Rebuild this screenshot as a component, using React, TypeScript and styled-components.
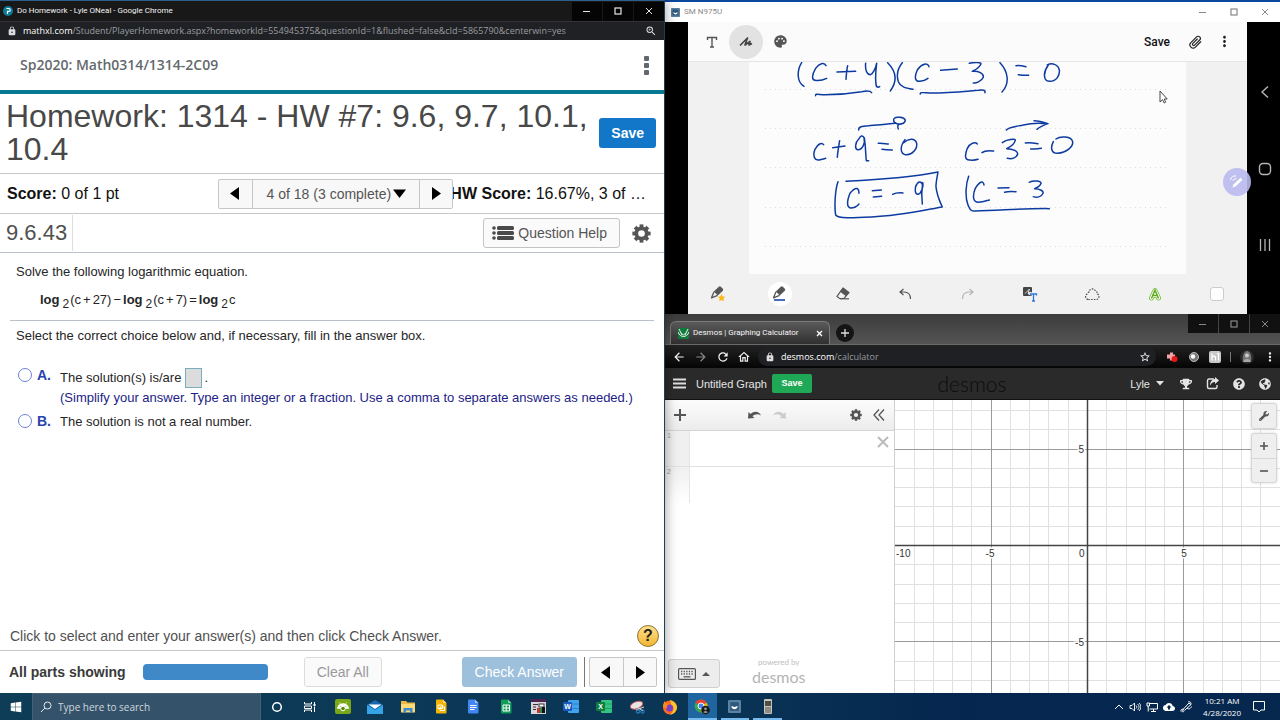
import React from "react";
import styled, { createGlobalStyle } from "styled-components";
import { FaWindows, FaTrophy, FaWrench, FaQuestionCircle, FaGlobeAmericas, FaAndroid } from "react-icons/fa";
import {
  MdPalette, MdMoreVert, MdArrowBack, MdArrowForward, MdRefresh, MdOutlineHome, MdLock, MdStarBorder,
  MdZoomIn, MdCloudUpload,
} from "react-icons/md";

const arial = `"Liberation Sans", Arial, sans-serif`;
const ui = `"Open Sans", "Segoe UI", sans-serif`;
const small = `Roboto, "Segoe UI", sans-serif`;
const BLUE = "#0d3ba0";

const GlobalStyle = createGlobalStyle`
  *, *::before, *::after { box-sizing: border-box; }
  body { margin: 0; font-family: ${arial}; color: #222; background: #000; }
  button { font: inherit; color: inherit; margin: 0; padding: 0; border: 0; background: none; }
  svg { display: block; flex: none; }
  p, h1, h2 { margin: 0; }
`;

const Screen = styled.div`
  min-height: 100vh;
  display: flex;
  flex-direction: column;
`;

const Desktop = styled.main`
  flex: 1;
  display: grid;
  grid-template-columns: 665fr 615fr;
`;

const IconButton = styled.button<{ $size?: number; $color?: string }>`
  display: grid;
  place-items: center;
  width: ${(p) => p.$size ?? 20}px;
  height: ${(p) => p.$size ?? 20}px;
  color: ${(p) => p.$color ?? "inherit"};
`;

/* ---------- homework window ---------- */

const HomeworkWindow = styled.section`
  position: relative;
  z-index: 1;
  display: flex;
  flex-direction: column;
  min-width: 0;
  background: #fff;
  border-top: 1px solid #2c5f8c;
  border-right: 1px solid #1f3f55;
  box-shadow: 0 0 12px rgba(0, 0, 0, 0.4);
`;

const TitleBar = styled.header<{ $light?: boolean }>`
  display: flex;
  align-items: center;
  height: 20px;
  padding-left: ${(p) => (p.$light ? 6 : 3)}px;
  gap: 4px;
  background: ${(p) => (p.$light ? "#fff" : "#181818")};
  color: ${(p) => (p.$light ? "#8a8a8a" : "#f2f2f2")};
  font: 8px/20px ${small};
`;

const WindowControls = styled.div<{ $bg?: string; $color?: string }>`
  display: flex;
  gap: 1px;
  margin-left: auto;
  color: ${(p) => p.$color ?? "#e8e8e8"};
  button {
    display: grid;
    place-items: center;
    width: 30px;
    height: 19px;
    background: ${(p) => p.$bg ?? "transparent"};
  }
`;

const AddressBar = styled.div`
  display: flex;
  align-items: center;
  height: 19px;
  padding: 0 7px 0 7px;
  gap: 6px;
  border-top: 1px solid #333;
  background: #202124;
  color: #9a9da1;
  font: 9px/18px ${ui};
  b { font-weight: 400; color: #fff; }
  svg:last-child { margin-left: auto; }
`;

const CourseHeader = styled.div`
  display: flex;
  align-items: center;
  justify-content: space-between;
  height: 54px;
  padding: 0 7px 0 20px;
  border-bottom: 4px solid #067a93;
  color: #63696e;
  font: 600 14px/20px ${ui};
`;

const HomeworkHeader = styled.div`
  display: flex;
  align-items: center;
  gap: 8px;
  padding: 6px 8px 7px 6px;
  border-bottom: 1px solid #c8c8cc;
  h1 {
    flex: 1;
    font: 400 32px/33px ${arial};
    color: #484848;
  }
`;

const PrimaryButton = styled.button<{ $muted?: boolean }>`
  height: 30px;
  padding: 0 ${(p) => (p.$muted ? 13 : 12)}px;
  border-radius: 3px;
  background: ${(p) => (p.$muted ? "#9dc0dd" : "#1277c9")};
  color: #fff;
  font: ${(p) => (p.$muted ? 400 : 700)} 14px/30px ${arial};
`;

const ScoreRow = styled.div`
  display: flex;
  align-items: center;
  height: 40px;
  padding: 0 18px 0 7px;
  border-bottom: 1px solid #c8c8cc;
  font-size: 16px;
  line-height: 20px;
  color: #111;
  white-space: nowrap;
`;

const ScoreText = styled.p<{ $fill?: boolean }>`
  flex: ${(p) => (p.$fill ? "1" : "none")};
`;

const ButtonGroup = styled.div<{ $overlap?: boolean }>`
  position: relative;
  z-index: 1;
  display: flex;
  margin-right: ${(p) => (p.$overlap ? -3 : 0)}px;
  border: 1px solid #c6c6c6;
  border-radius: 2px;
  background: #f8f8f8;
  button {
    display: flex;
    align-items: center;
    justify-content: center;
    gap: 2px;
    min-width: 33px;
    height: 28px;
    color: #555;
    font: 14px/28px ${arial};
  }
  button + button { border-left: 1px solid #c6c6c6; }
`;

const WideButton = styled.button`
  width: 167px;
`;

const QuestionRow = styled.div`
  display: flex;
  align-items: center;
  height: 39px;
  padding: 0 13px 0 6px;
  border-bottom: 1px solid #bcc3cf;
  color: #505050;
  h2 {
    padding-right: 5px;
    border-right: 1px solid #ddd;
    font: 400 22px/36px ${arial};
  }
`;

const OutlineButton = styled.button<{ $faded?: boolean }>`
  display: flex;
  align-items: center;
  gap: 4px;
  height: 30px;
  padding: 0 12px 0 ${(p) => (p.$faded ? 12 : 8)}px;
  border: 1px solid ${(p) => (p.$faded ? "#dcdcdc" : "#c4c4c4")};
  border-radius: 3px;
  background: #fafafa;
  color: ${(p) => (p.$faded ? "#999" : "#555")};
  font: 14px/28px ${arial};
`;

const QuestionTools = styled.div`
  display: flex;
  align-items: center;
  gap: 11px;
  margin-left: auto;
  color: #555;
`;

const Problem = styled.article`
  flex: 1;
  padding: 10px 10px 0;
  font-size: 13px;
  line-height: 18px;
  color: #262626;
`;

const Prompt = styled.p`
  padding-left: 6px;
`;

const Equation = styled.p`
  margin: 10px 0 11px;
  padding-left: 30px;
  sub {
    position: relative;
    top: 4px;
    margin: 0 1px 0 3px;
    font-size: 12px;
    line-height: 0;
    vertical-align: baseline;
  }
`;

const Op = styled.span`
  margin: 0 2px;
`;

const Rule = styled.hr`
  margin: 0 0 6px;
  border: 0;
  border-top: 1px solid #b9c0cc;
`;

const Choices = styled.div`
  display: grid;
  gap: 6px;
  padding: 22px 0 0 8px;
`;

const Choice = styled.div`
  display: grid;
  grid-template-columns: 19px 23px 1fr;
  align-items: start;
  input[type="radio"] {
    appearance: none;
    width: 14px;
    height: 14px;
    margin: 1px 0 0;
    border: 1px solid #6d84d6;
    border-radius: 50%;
    background: #fff;
  }
  label { display: contents; }
`;

const ChoiceLetter = styled.b`
  color: #2743ad;
  font-size: 14px;
  line-height: 16px;
`;

const AnswerLine = styled.span`
  display: flex;
  align-items: center;
  gap: 4px;
  height: 22px;
`;

const AnswerBox = styled.input`
  width: 17px;
  height: 20px;
  margin: 0 -2px 0 0;
  padding: 0;
  border: 1px solid #79aebf;
  background: #dcdcdc;
`;

const Note = styled.span`
  display: block;
  color: #221d86;
`;

const HintRow = styled.div`
  display: flex;
  align-items: center;
  justify-content: space-between;
  height: 29px;
  padding: 0 5px 0 10px;
  border-bottom: 1px solid #c8c8cc;
  color: #505050;
  font-size: 14px;
`;

const HelpButton = styled.button`
  width: 22px;
  height: 22px;
  border: 1px solid #8d7434;
  border-radius: 50%;
  background: linear-gradient(#ffe08a, #f2b632);
  color: #222;
  font: 700 16px/20px ${arial};
`;

const FooterBar = styled.footer`
  display: flex;
  align-items: center;
  height: 42px;
  padding: 0 7px 0 9px;
  color: #3a3a3a;
  font-size: 14px;
`;

const Progress = styled.div`
  width: 125px;
  height: 16px;
  margin: 0 36px 0 17px;
  border-radius: 4px;
  background: #3f89c8;
`;

const FooterActions = styled.div`
  display: flex;
  align-items: center;
  margin-left: auto;
`;

const Divider = styled.span`
  width: 1px;
  height: 30px;
  margin: 0 4px 0 7px;
  background: #777;
`;

/* ---------- phone mirror window ---------- */

const RightColumn = styled.div`
  display: flex;
  flex-direction: column;
  min-width: 0;
`;

const PhoneWindow = styled.section`
  border-top: 2px solid #0b479b;
  background: #000;
`;

const PhoneBody = styled.div`
  position: relative;
  display: grid;
  grid-template-columns: 23px 1fr 33px;
  height: 292px;
`;

const Notes = styled.div`
  grid-column: 2;
  display: flex;
  flex-direction: column;
  background: #f1f1f1;
`;

const NotesToolbar = styled.div`
  display: flex;
  align-items: center;
  height: 40px;
  padding: 0 9px 0 7px;
  border-bottom: 1px solid #e6e6e6;
  background: #fbfbfb;
  color: #555;
`;

const ToolCircle = styled.button<{ $active?: boolean }>`
  display: grid;
  place-items: center;
  width: 34px;
  height: 34px;
  border-radius: 50%;
  background: ${(p) => (p.$active ? "#e2e2e2" : "transparent")};
`;

const SaveText = styled.button`
  margin: 0 12px 0 auto;
  color: #111;
  font: 500 12px/20px Roboto, sans-serif;
`;

const Paper = styled.div`
  height: 212px;
  margin: 0 61px;
  background: #fcfcfd;
  svg { width: 100%; height: 212px; }
`;

const PenBar = styled.div`
  display: flex;
  justify-content: space-between;
  align-items: center;
  height: 40px;
  padding: 0 18px;
  color: #555;
`;

const PenTool = styled.button<{ $active?: boolean }>`
  display: grid;
  place-items: center;
  width: 24px;
  height: 24px;
  border-radius: 50%;
  background: ${(p) => (p.$active ? "#fff" : "transparent")};
`;

const AndroidKeys = styled.nav`
  display: flex;
  flex-direction: column;
  justify-content: space-between;
  align-items: center;
  padding: 63px 0 62px 2px;
  color: #b5b5b5;
`;

const FloatingPen = styled.button`
  position: absolute;
  right: 29px;
  top: 146px;
  display: grid;
  place-items: center;
  width: 28px;
  height: 28px;
  border-radius: 50%;
  background: rgba(186, 186, 240, 0.9);
`;

const Cursor = styled.svg`
  position: absolute;
  right: 112px;
  top: 68px;
`;

/* ---------- Desmos window ---------- */

const DesmosWindow = styled.section`
  flex: 1;
  display: flex;
  flex-direction: column;
  background: #fff;
`;

const TabStrip = styled.div`
  display: flex;
  align-items: flex-end;
  height: 31px;
  padding-left: 5px;
  background: linear-gradient(#3c3c3c, #545454);
  border-bottom: 1px solid #6a6a6a;
`;

const Tab = styled.div`
  display: flex;
  align-items: center;
  gap: 4px;
  width: 160px;
  height: 23px;
  padding: 0 6px 0 7px;
  border: 1px solid #7a7a7a;
  border-bottom: 0;
  border-radius: 6px 6px 0 0;
  background: linear-gradient(#5a5a5a, #303030);
  color: #f5f5f5;
  font: 8px/22px ${small};
  white-space: nowrap;
  button { margin-left: auto; }
`;

const NewTab = styled.button`
  display: grid;
  place-items: center;
  width: 18px;
  height: 18px;
  margin: 0 0 2px 6px;
  border-radius: 50%;
  background: #141414;
  color: #ddd;
`;

const TabControls = styled.div`
  align-self: flex-start;
  margin-left: auto;
`;

const BrowserBar = styled.div`
  display: flex;
  align-items: center;
  height: 23px;
  padding: 0 3px;
  background: linear-gradient(#222, #050505);
  color: #f2f2f2;
`;

const Omnibox = styled.div`
  flex: 1;
  display: flex;
  align-items: center;
  gap: 6px;
  height: 19px;
  margin: 0 9px 0 4px;
  padding: 0 5px 0 7px;
  border-radius: 10px;
  background: #1f2023;
  color: #96999d;
  font: 9px/19px ${ui};
  b { font-weight: 400; color: #fff; }
  svg:last-child { margin-left: auto; }
`;

const Extensions = styled.div`
  display: flex;
  align-items: center;
  gap: 9px;
`;

const DesmosHeader = styled.div`
  display: grid;
  grid-template-columns: 1fr auto 1fr;
  align-items: center;
  height: 32px;
  padding: 0 9px 0 8px;
  border-bottom: 1px solid #111;
  background: #2a2a2a;
  color: #e4e4e4;
`;

const HeaderSide = styled.div<{ $end?: boolean }>`
  display: flex;
  align-items: center;
  justify-content: ${(p) => (p.$end ? "flex-end" : "flex-start")};
  gap: ${(p) => (p.$end ? 14 : 5)}px;
  font-size: 11px;
  white-space: nowrap;
`;

const GraphTitle = styled.span`
  margin-left: 5px;
`;

const SaveGraph = styled.button`
  width: 40px;
  height: 19px;
  border-radius: 2px;
  background: #1fa855;
  color: #fff;
  font: 700 9px/19px ${arial};
`;

const UserMenu = styled.button`
  display: flex;
  align-items: center;
  gap: 6px;
  margin-right: 2px;
`;

const Wordmark = styled.span<{ $small?: boolean }>`
  color: ${(p) => (p.$small ? "#b4b4b4" : "#0c0c0c")};
  font: ${(p) => (p.$small ? 400 : 300)} ${(p) => (p.$small ? 16 : 21)}px/${(p) => (p.$small ? 19 : 24)}px Lato, sans-serif;
`;

const DesmosBody = styled.div`
  flex: 1;
  display: grid;
  grid-template-columns: 230px 1fr;
`;

const Expressions = styled.div`
  display: flex;
  flex-direction: column;
  border-right: 1px solid #cfcfcf;
`;

const ExpressionBar = styled.div`
  display: flex;
  align-items: center;
  height: 31px;
  padding: 0 4px 0 5px;
  border-bottom: 1px solid #d4d4d4;
  background: linear-gradient(#fcfcfc, #ececec);
  color: #555;
`;

const Grow = styled.span`
  flex: 1;
`;

const ExpressionRow = styled.div<{ $last?: boolean }>`
  display: flex;
  justify-content: space-between;
  height: 36px;
  border-bottom: ${(p) => (p.$last ? "0" : "1px solid #e2e2e2")};
  color: #b0b0b0;
`;

const Gutter = styled.span<{ $last?: boolean }>`
  width: 25px;
  padding: 1px 2px;
  border-right: 1px solid #e6e6e6;
  background: ${(p) => (p.$last ? "linear-gradient(#f0f0f0, #fff)" : "#f0f0f0")};
  color: #999;
  font-size: 7px;
  line-height: 8px;
`;

const PanelFooter = styled.div`
  display: flex;
  align-items: center;
  gap: 32px;
  margin-top: auto;
  padding: 0 0 3px 3px;
`;

const KeypadButton = styled.button`
  display: flex;
  align-items: center;
  justify-content: center;
  gap: 6px;
  width: 52px;
  height: 29px;
  border: 1px solid #d0d0d0;
  border-radius: 3px;
  background: #ededed;
  color: #555;
`;

const PoweredBy = styled.p`
  display: flex;
  flex-direction: column;
  align-items: center;
  padding-bottom: 4px;
  color: #bdbdbd;
  font: 8px/10px Lato, sans-serif;
`;

const GraphArea = styled.div`
  position: relative;
  overflow: hidden;
  svg.plot {
    position: absolute;
    width: 100%;
    height: 100%;
  }
`;

const GraphControls = styled.div`
  position: absolute;
  right: 3px;
  top: 3px;
  display: grid;
  gap: 4px;
`;

const ControlStack = styled.div`
  display: grid;
  border: 1px solid #d6d6d6;
  border-radius: 3px;
  background: #efefef;
  box-shadow: 0 0 3px rgba(0, 0, 0, 0.15);
  color: #555;
  button {
    display: grid;
    place-items: center;
    width: 24px;
    height: 24px;
  }
  button + button { border-top: 1px solid #d6d6d6; }
`;

/* ---------- taskbar ---------- */

const Taskbar = styled.footer`
  position: relative;
  z-index: 2;
  display: flex;
  align-items: stretch;
  height: 27px;
  background: linear-gradient(90deg, #0d3d57, #0a3555 55%, #05264f 75%, #06284f);
  color: #fff;
`;

const StartButton = styled.button`
  display: grid;
  place-items: center;
  width: 32px;
`;

const SearchBox = styled.label`
  display: flex;
  align-items: center;
  gap: 6px;
  width: 229px;
  padding-left: 7px;
  border: 1px solid #466076;
  border-bottom: 0;
  background: #34526a;
  input {
    flex: 1;
    min-width: 0;
    padding: 0;
    border: 0;
    background: none;
    color: #d5dde4;
    font: 10px/20px ${ui};
  }
  input::placeholder { color: #d0d8df; opacity: 1; }
`;

const Apps = styled.nav`
  display: grid;
  grid-template-columns: repeat(16, 1fr);
  width: 523px;
`;

const TaskButton = styled.button<{ $open?: boolean; $focus?: boolean }>`
  display: grid;
  place-items: center;
  margin: 0 2px;
  background: ${(p) => (p.$focus ? "#1f65a0" : "transparent")};
  box-shadow: ${(p) => (p.$open ? "inset 0 -2px #76b9ed" : "none")};
`;

const Tray = styled.div`
  display: flex;
  align-items: center;
  gap: 5px;
  margin-left: auto;
  padding-right: 15px;
`;

const Clock = styled.time`
  margin: 0 7px 0 5px;
  text-align: center;
  font: 8px/12px ${ui};
`;

/* ---------- small drawings ---------- */

const Svg = ({ w, h = w, vb, children, ...rest }: any) => (
  <svg width={w} height={h} viewBox={vb ?? `0 0 ${w} ${h}`} fill="none" {...rest}>{children}</svg>
);

const Controls = ({ bg, color }: { bg?: string; color?: string }) => (
  <WindowControls $bg={bg} $color={color}>
    <button aria-label="Minimize"><Svg w={8}><path d="M0 4.500h7" stroke="currentColor" /></Svg></button>
    <button aria-label="Maximize"><Svg w={8}><rect x="1" y="1" width="6" height="6" stroke="currentColor" strokeWidth="1.200" /></Svg></button>
    <button aria-label="Close"><Svg w={8}><path d="M1 1l6 6M7 1L1 7" stroke="currentColor" /></Svg></button>
  </WindowControls>
);

const Gear = ({ size }: { size: number }) => (
  <Svg w={size} vb="0 0 20 20" stroke="currentColor">
    <circle cx="10" cy="10" r="5.500" strokeWidth="4" />
    {[0, 45, 90, 135, 180, 225, 270, 315].map((a) => (
      <path key={a} d="M10 .4V4" strokeWidth="4" transform={`rotate(${a} 10 10)`} />
    ))}
  </Svg>
);

const Triangle = ({ dir }: { dir: "left" | "right" | "down" }) => {
  const d = { left: "M10 0v13L1 6.500z", right: "M2 0v13l9-6.500z", down: "M0 2.500h13L6.500 11z" }[dir];
  return <Svg w={13}><path d={d} fill="#000" /></Svg>;
};

const PearsonIcon = () => (
  <Svg w={10}><circle cx="5" cy="5" r="5" fill="#0e7c96" /><path d="M3.500 2.500h2.300a1.400 1.400 0 010 2.800H4.500V8" stroke="#fff" strokeWidth="1.200" /></Svg>
);

const FlowIcon = ({ size }: { size: number }) => (
  <Svg w={size} vb="0 0 12 12"><rect width="12" height="12" rx="1" fill="#5a82a3" /><rect x="2" y="2" width="8" height="8" fill="#2f587b" /><path d="M3 5.500c.5 4 5.500 4 6 0l-3 1z" fill="#fff" /></Svg>
);

const HelpListIcon = () => (
  <Svg w={22} h={16}>
    <g fill="#4a4a4a">
      {[1, 6, 11].map((y) => (
        <g key={y}><circle cx="2" cy={y + 2} r="1.800" /><rect x="5" y={y} width="17" height="4" rx="1.500" /></g>
      ))}
    </g>
  </Svg>
);

const PaperclipIcon = () => (
  <Svg w={16}>
    <g transform="rotate(45 8 8)">
      <path d="M11.200 4.500v7.500a3.200 3.200 0 01-6.400 0V4a2.200 2.200 0 014.400 0v7.200a1.200 1.200 0 01-2.400 0V5" stroke="currentColor" strokeWidth="1.200" strokeLinecap="round" />
    </g>
  </Svg>
);

const Marker = ({ mark }: { mark: React.ReactNode }) => (
  <Svg w={18}>
    <path d="M4.800 6.500l5-4.700a1.500 1.500 0 012 0l2 1.900a1.500 1.500 0 010 2L8.800 10.500z" fill="#555" />
    <path d="M5 6.800L2.500 12.800 8.600 10.300" stroke="#555" strokeWidth="1.300" strokeLinejoin="round" />
    {mark}
  </Svg>
);

const EraserIcon = () => (
  <Svg w={16}><path d="M8 2l6 4.500-5 6H4.500L2 10.500z" stroke="#555" strokeWidth="1.200" /><path d="M8 2l6 4.500-3 3.800-6.200-4.700z" fill="#555" /><path d="M5 12.800h9" stroke="#555" strokeWidth="1.200" /></Svg>
);

const CurvedArrow = ({ flip, color }: { flip?: boolean; color: string }) => (
  <Svg w={14}><g transform={flip ? "translate(14 0) scale(-1 1)" : undefined}><path d="M5.500 2L2 5l3.500 3M2 5h4c4 0 6.500 2.500 6.500 7" stroke={color} strokeWidth="1.200" /></g></Svg>
);

const SwoopArrow = ({ flip, color }: { flip?: boolean; color: string }) => (
  <Svg w={15} h={10}><g transform={flip ? "translate(15 0) scale(-1 1)" : undefined}><path d="M1.500 2L1 8.500l6.500-.5-2-1.800C8 4 11 3.500 14 5.500 12 1 7 .8 3.500 4z" fill={color} /></g></Svg>
);

const Handwriting = () => (
  <svg viewBox="749 62 437 212" preserveAspectRatio="xMidYMid slice" fill="none" aria-label="Handwritten solution">
    <g stroke="#dcdce0" strokeDasharray="1 4">
      {[89, 128, 167, 207, 246].map((y) => <path key={y} d={`M765 ${y}.5H1168`} />)}
    </g>
    <g stroke={BLUE} strokeWidth="4.500" strokeLinecap="round" strokeLinejoin="round">
      <g transform="translate(665 0) scale(.3333)">
        <path d="M410 188C396 210 394 245 417 259M483 197C478 186 462 190 452 205C440 225 440 240 450 241C462 243 475 240 485 235M516 216L572 214M548 197C545 210 544 225 543 238M602 190C600 210 606 224 616 224C624 222 632 205 635 190C632 215 630 240 634 258C638 264 641 262 644 260M668 188C690 210 700 240 676 273M712 188C698 205 694 225 700 245C706 260 720 264 744 268M792 200C788 186 770 192 757 210C746 235 752 245 765 244C775 243 785 238 789 235M827 211L877 207M913 190C930 186 950 187 948 192C942 205 930 210 922 214C940 212 957 220 955 232C950 245 932 250 925 249" />
        <path d="M452 287C450 280 460 284 480 284C520 284 560 280 590 275C605 272 616 272 620 278M766 282C764 275 780 279 800 279C850 279 900 274 940 271C955 269 962 270 960 278" />
        <path d="M476 434C470 426 458 432 450 448C442 470 450 482 462 480C470 479 478 476 482 475M503 443L540 438M524 422C521 440 518 455 517 472M583 415C568 430 570 448 578 449C592 450 602 430 597 413C592 404 586 408 583 415M598 413C603 445 602 470 604 482L611 482" />
        <path d="M581 390C580 380 590 378 610 377C640 374 670 373 690 370C680 355 690 350 705 352C722 354 725 362 715 370C705 374 695 372 690 368M700 387C697 380 700 374 703 372M640 430C650 429 660 431 670 432M651 448C662 450 673 450 682 450M720 419C704 440 706 460 720 464C742 468 758 445 755 430C750 412 730 416 716 428" />
        <path d="M519 545C510 570 508 620 512 645C520 656 560 654 620 651C700 648 780 630 832 621C822 600 815 580 813 560C813 545 817 530 819 516C760 528 680 537 543 544M582 580C582 560 570 562 555 580C545 605 545 622 557 624C568 624 578 617 582 612M622 572L649 570M625 591L650 589M683 583C693 578 702 578 714 579M773 555C768 540 758 545 752 560C748 582 756 586 765 580C774 565 776 555 773 548C770 570 770 595 772 612" />
      </g>
      <g transform="translate(960 0) scale(.3333)">
        <path d="M120 188C145 215 150 250 126 276M168 197C178 195 190 198 198 200M175 224C185 226 195 226 206 226M265 195C250 215 248 243 268 244C290 245 300 225 298 210C294 192 275 188 262 195" />
        <path d="M52 432C45 424 30 430 22 445C14 465 14 480 28 480C38 481 48 480 54 478M66 458C76 450 88 452 101 453M127 428C140 418 165 416 166 420C165 432 152 440 140 446C160 446 174 455 173 462C170 475 155 478 142 475M139 390C145 382 165 380 190 375C210 370 240 369 262 371M222 362C235 362 250 366 264 371C250 376 238 382 231 388M196 429C208 427 222 429 234 431M212 447C225 448 235 447 244 445M280 425C270 445 275 460 292 460C320 458 340 440 338 425C334 408 300 408 288 417" />
        <path d="M26 529C18 550 14 590 24 615C30 630 34 634 45 633C120 632 180 625 268 626M72 555C70 540 58 545 46 565C36 590 40 606 55 607C70 606 80 602 88 600M114 564L147 563M134 577C145 573 158 574 168 575M208 547C220 540 245 543 243 550C240 560 232 563 224 566C240 566 252 574 249 580C244 592 230 593 220 590" />
      </g>
    </g>
  </svg>
);

const range = (a: number, b: number) => Array.from({ length: b - a + 1 }, (_, i) => a + i);
const lineKind = (n: number) => (n === 0 ? "axis" : n % 5 === 0 ? "major" : "minor");

const Plot = () => {
  const px = (n: number) => Math.round(192 + n * 19.27) + 0.5;
  const py = (n: number) => Math.round(145 - n * 19.27) + 0.5;
  const shade = { minor: "#e0e0e0", major: "#9a9a9a", axis: "#444" };
  return (
    <svg className="plot" viewBox="0 0 385 293" preserveAspectRatio="xMidYMid slice" role="img" aria-label="Empty graph">
      {(["minor", "major", "axis"] as const).map((kind) => (
        <g key={kind} strokeWidth={kind === "axis" ? 1.5 : 1} stroke={shade[kind]}>
          {range(-9, 9).filter((n) => lineKind(n) === kind).map((n) => <path key={n} d={`M${px(n)} 0V293`} />)}
          {range(-7, 7).filter((n) => lineKind(n) === kind).map((n) => <path key={n} d={`M0 ${py(n)}H385`} />)}
        </g>
      ))}
      <g fontFamily="Liberation Sans, sans-serif" fontSize="10" fill="#333" stroke="#fff" strokeWidth="3" paintOrder="stroke">
        <text x="1" y="157">-10</text>
        <text x="95" y="157" textAnchor="middle">-5</text>
        <text x="184" y="157">0</text>
        <text x="289" y="157" textAnchor="middle">5</text>
        <text x="189" y="53" textAnchor="end">5</text>
        <text x="189" y="246" textAnchor="end">-5</text>
      </g>
    </svg>
  );
};

const FileIcon = ({ fill, children }: any) => (
  <Svg w={12} h={15}><path d="M1 1.500A1 1 0 012 .5h6l3.500 3.500v9.500a1 1 0 01-1 1H2a1 1 0 01-1-1z" fill={fill} /><path d="M8 .5V4h3.500z" fill="#fff" opacity=".5" />{children}</Svg>
);

const OfficeIcon = ({ letter, dark, light }: { letter: string; dark: string; light: string }) => (
  <Svg w={17} h={15}>
    <rect x="5" y="1" width="11" height="13" rx="1" fill={light} />
    <path d="M5 5h11M5 9.500h11" stroke={dark} strokeOpacity=".5" />
    <rect y="3" width="9" height="9" rx="1" fill={dark} />
    <text x="4.500" y="10" fontSize="7" fontWeight="700" fontFamily="Liberation Sans" textAnchor="middle" fill="#fff">{letter}</text>
  </Svg>
);

const taskApps: { name: string; icon: React.ReactNode; open?: boolean; focus?: boolean }[] = [
  { name: "Cortana", icon: <Svg w={12}><circle cx="6" cy="6" r="4.300" stroke="#fff" strokeWidth="1.500" /></Svg> },
  { name: "Task view", icon: <Svg w={12}><path d="M.5 1v2h7V1M.5 11V9h7v2M.5 5h7v2.500h-7zM10.500 1v2M10.500 5.500V11" stroke="#fff" /><rect x="9.500" y="3" width="2" height="2" fill="#fff" /></Svg> },
  { name: "Android", icon: <Svg w={16} h={15}><rect width="16" height="15" rx="2" fill="#78a818" /><FaAndroid x="2" y="1" size={12} color="#fff" /><circle cx="8" cy="9.500" r="2.300" fill="#5b8a10" stroke="#fff" /></Svg> },
  { name: "Mail", icon: <Svg w={16} h={14}><path d="M0 5l8-5 8 5v9H0z" fill="#1668b5" /><path d="M1.500 4.500h13L8 9z" fill="#fff" /><path d="M0 5l8 5 8-5v9H0z" fill="#35a5e8" /></Svg> },
  { name: "File Explorer", icon: <Svg w={16} h={13}><path d="M1 1h5l1.500 1.500H15V12H1z" fill="#e9b847" /><path d="M1 4h14v8.500H1z" fill="#fbd975" /><path d="M3.500 12.500V8h9v4.500h-2.500v-2H6v2z" fill="#3d8bd0" /></Svg> },
  { name: "Slides", icon: <FileIcon fill="#f4b400"><path d="M3 6h4.500v3.500H3zM5 8h4.500v3.500H5z" stroke="#fff" /></FileIcon> },
  { name: "Docs", icon: <FileIcon fill="#4285f4"><path d="M3 6.500h6.500M3 8.500h6.500M3 10.500h4.500" stroke="#fff" /></FileIcon> },
  { name: "Sheets", icon: <FileIcon fill="#0f9d58"><path d="M3 6h6.500v6H3zM3 9h6.500M6.200 6v6" stroke="#fff" /></FileIcon> },
  { name: "Gradebook", icon: <Svg w={15} h={15}><rect width="15" height="15" fill="#d8d4dc" /><rect width="15" height="3" fill="#4d2350" /><path d="M2 5.500h5M2 8h3M2 10.500h3" stroke="#333" /><rect x="8" y="5" width="5" height="3" fill="#fff" stroke="#333" /><rect x="6" y="9" width="3" height="5" fill="#c13a2c" /><rect x="9" y="9" width="2" height="5" fill="#2a8a55" /><rect x="11" y="8" width="3" height="6" fill="#111" /></Svg> },
  { name: "Word", icon: <OfficeIcon letter="W" dark="#185abd" light="#41a5ee" /> },
  { name: "Excel", icon: <OfficeIcon letter="X" dark="#107c41" light="#33c481" /> },
  { name: "Snipping Tool", icon: <Svg w={16} h={14}><ellipse cx="7.500" cy="5" rx="6.500" ry="3.500" transform="rotate(-20 8 5)" fill="#e8e4e6" stroke="#c25a5a" /><path d="M7 10l8-3M8 7l6 4" stroke="#ddd" /><circle cx="9" cy="11.500" r="1.700" stroke="#3a96d8" /><circle cx="13.500" cy="11.500" r="1.700" stroke="#3a96d8" /></Svg> },
  { name: "Firefox", icon: <Svg w={16}><circle cx="8" cy="8.500" r="7" fill="#ff6a1f" /><path d="M8 1c4 1 7 4 7 8-1 4-4 6.500-7 6.500C12 13 13 8 9 5z" fill="#ffc52e" /><circle cx="7.500" cy="9" r="3.500" fill="#7a3fc8" /><path d="M1 8c0-3 1-5 2-6 0 2 2 3 4 3-2 1-3 3-1.500 4.500" fill="#ff8a1f" /></Svg> },
  {
    name: "Chrome", open: true, focus: true,
    icon: <Svg w={16}><circle cx="7" cy="7" r="6.500" fill="#34a853" /><path d="M7 7L1.400 3.700A6.500 6.500 0 0112.600 3.700z" fill="#ea4335" /><path d="M7 7l5.600-3.300A6.500 6.500 0 017 13.500z" fill="#fbbc05" /><circle cx="7" cy="7" r="3" fill="#4285f4" stroke="#fff" /><circle cx="11.500" cy="11" r="4.300" fill="#1a1a1a" /><circle cx="11.500" cy="9.800" r="1.400" fill="#999" /><path d="M9.500 14c0-3 4-3 4 0" fill="#888" /></Svg>,
  },
  { name: "Flow", open: true, icon: <FlowIcon size={13} /> },
  { name: "Phone", open: true, icon: <Svg w={8} h={15}><rect width="8" height="15" rx="1" fill="#c8c4b8" /><rect x="1" y="2" width="6" height="5" fill="#4b4f4a" /><path d="M1 9h6M1 11h6M1 13h6" stroke="#555" /></Svg> },
];

/* ---------- windows ---------- */

const Homework = () => (
  <HomeworkWindow>
    <TitleBar>
      <PearsonIcon />
      <span>Do Homework - Lyle ONeal - Google Chrome</span>
      <Controls bg="#050505" />
    </TitleBar>
    <AddressBar>
      <MdLock size={10} color="#ddd" />
      <span><b>mathxl.com</b>/Student/PlayerHomework.aspx?homeworkId=554945375&amp;questionId=1&amp;flushed=false&amp;cId=5865790&amp;centerwin=yes</span>
      <MdZoomIn size={12} color="#ddd" />
    </AddressBar>
    <CourseHeader>
      <span>Sp2020: Math0314/1314-2C09</span>
      <IconButton aria-label="Menu"><Svg w={6} h={19} fill="#62686d"><rect width="5" height="5" rx="1" /><rect y="7" width="5" height="5" rx="1" /><rect y="14" width="5" height="5" rx="1" /></Svg></IconButton>
    </CourseHeader>
    <HomeworkHeader>
      <h1>Homework: 1314 - HW #7: 9.6, 9.7, 10.1, 10.4</h1>
      <PrimaryButton>Save</PrimaryButton>
    </HomeworkHeader>
    <ScoreRow>
      <ScoreText $fill><b>Score:</b> 0 of 1 pt</ScoreText>
      <ButtonGroup $overlap>
        <button aria-label="Previous question"><Triangle dir="left" /></button>
        <WideButton>4 of 18 (3 complete) <Triangle dir="down" /></WideButton>
        <button aria-label="Next question"><Triangle dir="right" /></button>
      </ButtonGroup>
      <ScoreText><b>HW Score:</b> 16.67%, 3 of …</ScoreText>
    </ScoreRow>
    <QuestionRow>
      <h2>9.6.43</h2>
      <QuestionTools>
        <OutlineButton><HelpListIcon />Question Help</OutlineButton>
        <IconButton aria-label="Settings"><Gear size={19} /></IconButton>
      </QuestionTools>
    </QuestionRow>
    <Problem>
      <Prompt>Solve the following logarithmic equation.</Prompt>
      <Equation>
        <b>log</b><sub>2</sub>(c<Op>+</Op>27)<Op>−</Op><b>log</b><sub>2</sub>(c<Op>+</Op>7)<Op>=</Op><b>log</b><sub>2</sub>c
      </Equation>
      <Rule />
      <Prompt>Select the correct choice below and, if necessary, fill in the answer box.</Prompt>
      <Choices>
        <Choice>
          <input type="radio" name="choice" id="choice-a" />
          <label htmlFor="choice-a">
            <ChoiceLetter>A.</ChoiceLetter>
            <span>
              <AnswerLine>The solution(s) is/are <AnswerBox aria-label="Answer" /> .</AnswerLine>
              <Note>(Simplify your answer. Type an integer or a fraction. Use a comma to separate answers as needed.)</Note>
            </span>
          </label>
        </Choice>
        <Choice>
          <input type="radio" name="choice" id="choice-b" />
          <label htmlFor="choice-b"><ChoiceLetter>B.</ChoiceLetter><span>The solution is not a real number.</span></label>
        </Choice>
      </Choices>
    </Problem>
    <HintRow>
      <span>Click to select and enter your answer(s) and then click Check Answer.</span>
      <HelpButton>?</HelpButton>
    </HintRow>
    <FooterBar>
      <b>All parts showing</b>
      <Progress />
      <OutlineButton $faded>Clear All</OutlineButton>
      <FooterActions>
        <PrimaryButton $muted>Check Answer</PrimaryButton>
        <Divider />
        <ButtonGroup>
          <button aria-label="Previous"><Triangle dir="left" /></button>
          <button aria-label="Next"><Triangle dir="right" /></button>
        </ButtonGroup>
      </FooterActions>
    </FooterBar>
  </HomeworkWindow>
);

const Phone = () => (
  <PhoneWindow>
    <TitleBar $light>
      <FlowIcon size={9} />
      <span>SM N975U</span>
      <Controls color="#888" />
    </TitleBar>
    <PhoneBody>
      <Notes>
        <NotesToolbar>
          <ToolCircle aria-label="Text"><Svg w={12}><path d="M1.500 4V1.500h9V4M6 1.500v9.500M4 11h4" stroke="#555" strokeWidth="1.400" /></Svg></ToolCircle>
          <ToolCircle $active aria-label="Pen"><Svg w={14} h={10}><path d="M1 8.500L8.500 1 6 8l5-3.500-1 3.500 3-1.500" stroke="#444" strokeWidth="1.700" strokeLinejoin="round" /></Svg></ToolCircle>
          <ToolCircle aria-label="Brushes"><MdPalette size={15} /></ToolCircle>
          <SaveText>Save</SaveText>
          <IconButton $size={28} $color="#222" aria-label="Attach"><PaperclipIcon /></IconButton>
          <IconButton $size={28} $color="#222" aria-label="More"><MdMoreVert size={17} /></IconButton>
        </NotesToolbar>
        <Paper><Handwriting /></Paper>
        <PenBar>
          <PenTool aria-label="Favourite pens"><Marker mark={<path d="M12.500 9l1.200 2.400 2.600.4-1.900 1.800.5 2.600-2.400-1.200-2.300 1.200.4-2.600L8.700 11.800l2.600-.4z" fill="#fbb917" />} /></PenTool>
          <PenTool $active aria-label="Pen"><Marker mark={<path d="M3 15h11" stroke={BLUE} strokeWidth="1.500" />} /></PenTool>
          <PenTool aria-label="Eraser"><EraserIcon /></PenTool>
          <PenTool aria-label="Undo"><CurvedArrow color="#555" /></PenTool>
          <PenTool aria-label="Redo"><CurvedArrow flip color="#b5b5b5" /></PenTool>
          <PenTool aria-label="Convert to text"><Svg w={16}><rect x="1" y="1" width="9" height="9" rx="1" fill="#444" /><path d="M3 7.500L7.500 3 6 7.500 9 6" stroke="#ddd" /><path d="M8 9V7.800h7V9M11.500 8v7M10 15h3" stroke="#f1f1f1" strokeWidth="3" /><path d="M8.500 9.500V8h6v1.500M11.500 8v7M10 15h3" stroke="#2f78d8" strokeWidth="1.300" /></Svg></PenTool>
          <PenTool aria-label="Lasso"><Svg w={16} h={14}><path d="M4 12.500a3 3 0 01-1-5.500c.5-1.500 2-2 2-2 .5-4 6-4 6.500-.5 2.500.5 2 2.500 2 2.500 2.500 1 1.500 5.500-1 5.500z" stroke="#444" strokeDasharray="1.500 1.300" strokeWidth="1.200" /></Svg></PenTool>
          <PenTool aria-label="Stylise"><Svg w={14}><path d="M3.500 11L7 3.500 10.500 11M5 8.500h4" stroke="#7fc241" strokeWidth="5" strokeLinejoin="round" strokeLinecap="round" /><path d="M3.500 11L7 3.500 10.500 11M5 8.500h4" stroke="#fff" strokeWidth="3.200" strokeLinejoin="round" strokeLinecap="round" /><path d="M3.500 11.500L7 3l3.500 8.500M5 8.500h4" stroke="#5faa22" strokeWidth="1.500" /></Svg></PenTool>
          <PenTool aria-label="Colour"><Svg w={16}><rect x="1.500" y="1.500" width="13" height="13" rx="2.500" fill="#fff" stroke="#ccc" /></Svg></PenTool>
        </PenBar>
      </Notes>
      <AndroidKeys>
        <Svg w={10} h={14}><path d="M8 1.500L2 7l6 5.500" stroke="currentColor" strokeWidth="1.400" /></Svg>
        <Svg w={14}><rect x="1.500" y="1.500" width="11" height="11" rx="3.500" stroke="currentColor" strokeWidth="1.400" /></Svg>
        <Svg w={12} h={14}><path d="M1.500 1v12M6 1v12M10.500 1v12" stroke="currentColor" strokeWidth="1.300" /></Svg>
      </AndroidKeys>
      <Cursor width="9" height="14" viewBox="0 0 9 14" fill="none"><path d="M1 1v11l2.500-2.300L5.200 13l1.500-.8L5.200 9h3z" fill="#fff" stroke="#333" strokeWidth=".9" /></Cursor>
      <FloatingPen aria-label="Air command"><Svg w={16}><path d="M3.500 13.500l1-3 7-6.700 2 2-7 6.700z" fill="#fff" /><path d="M1.500 6C2 3 4 1.500 7 2M4 7c.3-1.500 1.500-2.500 3.500-2.300" stroke="#fff" /></Svg></FloatingPen>
    </PhoneBody>
  </PhoneWindow>
);

const Desmos = () => (
  <DesmosWindow>
    <TabStrip>
      <Tab>
        <Svg w={11}><rect width="11" height="11" rx="1" fill="#117a3d" /><path d="M0 4c2 6 9 6 11 0M1 1l3 6M10 1L7 7M3 5l2.500 2L8 5" stroke="#e8f5ec" /></Svg>
        Desmos | Graphing Calculator
        <button aria-label="Close tab"><Svg w={7}><path d="M1 1l5 5M6 1L1 6" stroke="#fff" strokeWidth="1.300" /></Svg></button>
      </Tab>
      <NewTab aria-label="New tab"><Svg w={8}><path d="M4 0v8M0 4h8" stroke="#ddd" strokeWidth="1.300" /></Svg></NewTab>
      <TabControls><Controls bg="#111" color="#888" /></TabControls>
    </TabStrip>
    <BrowserBar>
      <IconButton $size={22} aria-label="Back"><MdArrowBack size={14} /></IconButton>
      <IconButton $size={22} $color="#888" aria-label="Forward"><MdArrowForward size={14} /></IconButton>
      <IconButton $size={21} aria-label="Reload"><MdRefresh size={14} /></IconButton>
      <IconButton $size={21} aria-label="Home"><MdOutlineHome size={14} /></IconButton>
      <Omnibox>
        <MdLock size={10} color="#ddd" />
        <span><b>desmos.com</b>/calculator</span>
        <MdStarBorder size={12} color="#eee" />
      </Omnibox>
      <Extensions>
        <Svg w={14} h={12}><path d="M2 3.500h3V1.500h3v2h2v6H5v-2H2z" fill="#f3a5a5" /><circle cx="9.500" cy="8" r="3" fill="#e81818" /></Svg>
        <Svg w={12}><circle cx="6" cy="6" r="4.500" fill="#777" stroke="#bbb" /><circle cx="5" cy="5.500" r="2.200" fill="#fff" /></Svg>
        <Svg w={12}><rect width="12" height="12" rx="2" fill="#c8c8c8" /><path d="M3 2.500v7M3 6c2-1.500 3.500-1 3.500 1v2.500M8 2.500h1.500v7" stroke="#fff" strokeWidth="1.200" /></Svg>
        <Svg w={1} h={10}><path d="M.5 0v10" stroke="#777" /></Svg>
        <Svg w={14}><circle cx="7" cy="7" r="7" fill="#2a2a2a" /><path d="M3 12C2 6 4 1 7 1s5 4 4 11z" fill="#777" /><circle cx="7" cy="5.500" r="2" fill="#ccc" /><path d="M3.500 12c0-4 7-4 7 0z" fill="#aaa" /></Svg>
        <MdMoreVert size={14} />
      </Extensions>
    </BrowserBar>
    <DesmosHeader>
      <HeaderSide>
        <IconButton $size={13} aria-label="Open graph"><Svg w={13} h={11}><path d="M0 1.500h13M0 5.500h13M0 9.500h13" stroke="#ddd" strokeWidth="2" /></Svg></IconButton>
        <GraphTitle>Untitled Graph</GraphTitle>
        <SaveGraph>Save</SaveGraph>
      </HeaderSide>
      <Wordmark>desmos</Wordmark>
      <HeaderSide $end>
        <UserMenu>Lyle <Svg w={8} h={5}><path d="M0 0h8L4 4.500z" fill="#e4e4e4" /></Svg></UserMenu>
        <FaTrophy size={12} />
        <Svg w={13}><path d="M8 2H3a1.500 1.500 0 00-1.500 1.500V10A1.500 1.500 0 003 11.500h6.500A1.500 1.500 0 0011 10V8" stroke="#e4e4e4" strokeWidth="1.400" /><path d="M9 0l4 3.500L9 7V5C6.500 5 5.500 6 4 8.500 4 5 6 2.200 9 2z" fill="#e4e4e4" /></Svg>
        <FaQuestionCircle size={12} />
        <FaGlobeAmericas size={12} />
      </HeaderSide>
    </DesmosHeader>
    <DesmosBody>
      <Expressions>
        <ExpressionBar>
          <IconButton aria-label="Add item"><Svg w={12}><path d="M6 0v12M0 6h12" stroke="#555" strokeWidth="2" /></Svg></IconButton>
          <Grow />
          <IconButton $size={25} aria-label="Undo"><SwoopArrow color="#555" /></IconButton>
          <IconButton $size={25} aria-label="Redo"><SwoopArrow flip color="#ccc" /></IconButton>
          <Grow />
          <IconButton $size={25} aria-label="Edit list"><Gear size={12} /></IconButton>
          <IconButton $size={22} aria-label="Hide list"><Svg w={12} h={12}><path d="M6 .5L1 6l5 5.500M11 .5L6 6l5 5.500" stroke="#555" strokeWidth="1.300" /></Svg></IconButton>
        </ExpressionBar>
        <ExpressionRow>
          <Gutter>1</Gutter>
          <IconButton $size={22} aria-label="Delete expression"><Svg w={12}><path d="M1 1l10 10M11 1L1 11" stroke="#bbb" strokeWidth="2" /></Svg></IconButton>
        </ExpressionRow>
        <ExpressionRow $last><Gutter $last>2</Gutter></ExpressionRow>
        <PanelFooter>
          <KeypadButton aria-label="Show keypad">
            <Svg w={18} h={12}><rect x=".6" y=".6" width="16.800" height="10.800" rx="1" stroke="#555" strokeWidth="1.200" /><path d="M3 3.500h12M3 6h12" stroke="#555" strokeWidth="1.300" strokeDasharray="1.300 1.300" /><path d="M5.500 8.800h7" stroke="#555" strokeWidth="1.300" /></Svg>
            <Svg w={8} h={5}><path d="M0 5h8L4 1z" fill="#555" /></Svg>
          </KeypadButton>
          <PoweredBy><span>powered by</span><Wordmark $small>desmos</Wordmark></PoweredBy>
        </PanelFooter>
      </Expressions>
      <GraphArea>
        <Plot />
        <GraphControls>
          <ControlStack><button aria-label="Graph settings"><FaWrench size={10} /></button></ControlStack>
          <ControlStack>
            <button aria-label="Zoom in"><Svg w={8}><path d="M4 0v8M0 4h8" stroke="#555" strokeWidth="1.600" /></Svg></button>
            <button aria-label="Zoom out"><Svg w={8}><path d="M0 4h8" stroke="#555" strokeWidth="1.600" /></Svg></button>
          </ControlStack>
        </GraphControls>
      </GraphArea>
    </DesmosBody>
  </DesmosWindow>
);

export default function App() {
  return (
    <Screen>
      <GlobalStyle />
      <Desktop>
        <Homework />
        <RightColumn>
          <Phone />
          <Desmos />
        </RightColumn>
      </Desktop>
      <Taskbar>
        <StartButton aria-label="Start"><FaWindows size={12} /></StartButton>
        <SearchBox>
          <Svg w={12}><circle cx="7.500" cy="4.500" r="3.500" stroke="#e5eaee" /><path d="M5 7L1 11" stroke="#e5eaee" /></Svg>
          <input aria-label="Search" placeholder="Type here to search" />
        </SearchBox>
        <Apps>
          {taskApps.map((a) => <TaskButton key={a.name} aria-label={a.name} $open={a.open} $focus={a.focus}>{a.icon}</TaskButton>)}
        </Apps>
        <Tray>
          <Svg w={10} h={6}><path d="M1 5l4-4 4 4" stroke="#fff" /></Svg>
          <Svg w={12} h={10}><path d="M1 3.500h2L5.500 1v8L3 6.500H1zM7 3.500c1 1 1 2 0 3M8.500 2c2 2 2 4 0 6M10 1c2.500 2.500 2.500 5.500 0 8" stroke="#fff" strokeWidth=".9" /></Svg>
          <Svg w={12} h={10}><path d="M3.500 1.500h8v5.500H3.500M5 9.500h5M7.500 7v2.500M1 1h2.500v3H1zM2.200 4v5.500" stroke="#fff" /></Svg>
          <MdCloudUpload size={12} />
          <Svg w={13} h={12}><path d="M1 10.500c-1-3 4-3 3-.5-1 2-3 .5-1-1.500l6-6.500 2 1.500-6 5.500M8 1c2-1 4 1 2.500 3M7 7c2 2 4 0 4.500-1.500" stroke="#fff" /></Svg>
          <Clock>10:21 AM<br />4/28/2020</Clock>
          <Svg w={12} h={12}><path d="M.5.500h11v8.500H8L6 11 4 9H.5z" stroke="#fff" /></Svg>
        </Tray>
      </Taskbar>
    </Screen>
  );
}
